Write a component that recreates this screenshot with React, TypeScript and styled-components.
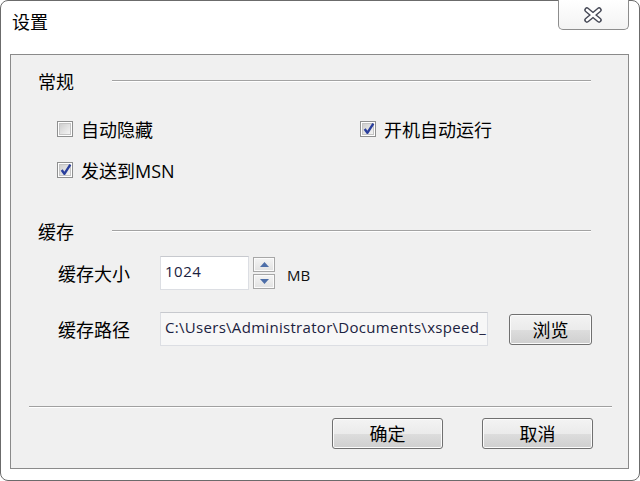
import React from "react";
import styled, { createGlobalStyle } from "styled-components";

const GlobalStyle = createGlobalStyle`
    html, body {
        margin: 0;
        padding: 0;
        background: #ffffff;
    }
    * {
        box-sizing: border-box;
    }
`;

const font = `"Open Sans", "Noto Sans CJK SC", sans-serif`;

const Window = styled.div`
    width: 640px;
    height: 481px;
    border: 1px solid #6b6b6b;
    border-radius: 8px;
    background: #ffffff;
    display: flex;
    flex-direction: column;
    font-family: ${font};
    color: #000;
`;

const TitleBar = styled.div`
    height: 53px;
    display: flex;
    justify-content: space-between;
    align-items: flex-start;
    padding-left: 11px;
    padding-right: 10px;
`;

const Title = styled.div`
    margin-top: 9px;
    font-size: 18px;
    line-height: 24px;
`;

const CloseButton = styled.div`
    width: 71px;
    height: 30px;
    margin-top: -1px;
    border: 1px solid #8d8d8d;
    border-top: none;
    border-radius: 0 0 5px 5px;
    background: linear-gradient(#ffffff, #f3f3f3);
    display: flex;
    align-items: center;
    justify-content: center;
    padding-right: 2px;
`;

const Panel = styled.div`
    flex: 1;
    margin: 0 10px 11px 9px;
    border: 1px solid #8a8a8a;
    background: #f0f0f0;
    display: flex;
    flex-direction: column;
`;

const SectionHeader = styled.div<{ $top: number }>`
    margin-top: ${(p) => p.$top}px;
    height: 24px;
    display: grid;
    grid-template-columns: 74px 1fr;
    align-items: center;
    padding-left: 27px;
    padding-right: 37px;
    font-size: 18px;
`;

const EtchedLine = styled.div`
    height: 2px;
    border-top: 1px solid #a3a3a3;
    border-bottom: 1px solid #ffffff;
`;

const CheckGrid = styled.div`
    margin-top: 25px;
    padding-left: 46px;
    display: grid;
    grid-template-columns: 303px 1fr;
    row-gap: 17px;
`;

const CheckItem = styled.label`
    height: 24px;
    display: flex;
    align-items: center;
    gap: 8px;
    font-size: 18px;
`;

const Box = styled.span`
    width: 16px;
    height: 16px;
    border: 1px solid #8e8f8f;
    background: #ffffff;
    padding: 1px;
    display: flex;
`;

const BoxInner = styled.span`
    flex: 1;
    background: linear-gradient(135deg, #cfcfcf, #f4f4f4);
    border: 1px solid #c4c4c4;
    position: relative;
`;

const Check = styled.svg`
    position: absolute;
    left: -1px;
    top: -2px;
`;

const FieldRow = styled.div<{ $top: number }>`
    margin-top: ${(p) => p.$top}px;
    padding-left: 47px;
    display: flex;
    align-items: center;
`;

const FieldLabel = styled.div`
    width: 102px;
    font-size: 18px;
`;

const TextBox = styled.div<{ $width: number; $readonly?: boolean }>`
    width: ${(p) => p.$width}px;
    height: 34px;
    border: 1px solid #dcdee3;
    border-top-color: #c7c9ce;
    background: ${(p) => (p.$readonly ? "#f7f7f7" : "#ffffff")};
    color: #1b2240;
    font-size: 15px;
    letter-spacing: ${(p) => (p.$readonly ? 0.3 : 0.5)}px;
    line-height: 24px;
    padding: 2px 0 0 4px;
    white-space: nowrap;
    overflow: hidden;
    font-family: ${font};
`;

const Spin = styled.div`
    margin-left: 4px;
    display: flex;
    flex-direction: column;
    gap: 2px;
`;

const SpinButton = styled.div`
    width: 22px;
    height: 15px;
    border: 1px solid #a7a7a7;
    box-shadow: inset 0 0 0 1px #fbfbfb;
    background: linear-gradient(#f4f4f4, #e2e2e2);
    display: flex;
    align-items: center;
    justify-content: center;
`;

const Unit = styled.div`
    margin-left: 12px;
    margin-top: 4px;
    font-size: 15px;
    color: #111;
`;

const PushButton = styled.div<{ $width: number }>`
    width: ${(p) => p.$width}px;
    height: 31px;
    border: 1px solid #707070;
    border-radius: 3px;
    box-shadow: inset 0 0 0 1px #fbfbfb;
    background: linear-gradient(#f3f3f3 0%, #ebebeb 50%, #dddddd 51%, #cfcfcf 100%);
    display: flex;
    align-items: center;
    justify-content: center;
    font-size: 18px;
    line-height: 1;
`;

const BrowseSlot = styled.div`
    margin-left: 21px;
    margin-top: 1px;
`;

const Separator = styled.div`
    margin: 60px 16px 0 18px;
    height: 2px;
    border-top: 1px solid #a0a0a0;
    border-bottom: 1px solid #ffffff;
`;

const ButtonRow = styled.div`
    margin-top: 10px;
    padding-right: 35px;
    display: flex;
    justify-content: flex-end;
    gap: 39px;
`;

const CheckBox = ({ checked, label }: { checked?: boolean; label: string }) => (
    <CheckItem>
        <Box>
            <BoxInner>
                {checked && (
                    <Check width="14" height="14" viewBox="0 0 13 13">
                        <path d="M2.5 6.5 L5 10 L10.5 1.5" fill="none" stroke="#2a3f9c" strokeWidth="2.2" strokeLinejoin="round" />
                    </Check>
                )}
            </BoxInner>
        </Box>
        <span>{label}</span>
    </CheckItem>
);

const Arrow = ({ up }: { up?: boolean }) => (
    <svg width="9" height="5" viewBox="0 0 9 5">
        <path d={up ? "M0 5 L4.5 0 L9 5 Z" : "M0 0 L4.5 5 L9 0 Z"} fill="#4d6ea8" />
    </svg>
);

const App = () => {
    return (
        <>
            <GlobalStyle />
            <Window>
                <TitleBar>
                    <Title>设置</Title>
                    <CloseButton>
                        <svg width="20" height="16" viewBox="0 0 20 16">
                            <path d="M4 3 L16 13 M16 3 L4 13" stroke="#474a57" strokeWidth="5.5" strokeLinecap="round" />
                            <path d="M4 3 L16 13 M16 3 L4 13" stroke="#ffffff" strokeWidth="2.6" strokeLinecap="round" />
                        </svg>
                    </CloseButton>
                </TitleBar>
                <Panel>
                    <SectionHeader $top={13}>
                        <span>常规</span>
                        <EtchedLine />
                    </SectionHeader>
                    <CheckGrid>
                        <CheckBox label="自动隐藏" />
                        <CheckBox checked label="开机自动运行" />
                        <CheckBox checked label="发送到MSN" />
                    </CheckGrid>
                    <SectionHeader $top={36}>
                        <span>缓存</span>
                        <EtchedLine />
                    </SectionHeader>
                    <FieldRow $top={14}>
                        <FieldLabel>缓存大小</FieldLabel>
                        <TextBox $width={89}>1024</TextBox>
                        <Spin>
                            <SpinButton>
                                <Arrow up />
                            </SpinButton>
                            <SpinButton>
                                <Arrow />
                            </SpinButton>
                        </Spin>
                        <Unit>MB</Unit>
                    </FieldRow>
                    <FieldRow $top={22}>
                        <FieldLabel>缓存路径</FieldLabel>
                        <TextBox $width={328} $readonly>
                            C:\Users\Administrator\Documents\xspeed_
                        </TextBox>
                        <BrowseSlot>
                            <PushButton $width={83}>浏览</PushButton>
                        </BrowseSlot>
                    </FieldRow>
                    <Separator />
                    <ButtonRow>
                        <PushButton $width={111}>确定</PushButton>
                        <PushButton $width={111}>取消</PushButton>
                    </ButtonRow>
                </Panel>
            </Window>
        </>
    );
};

export default App;
